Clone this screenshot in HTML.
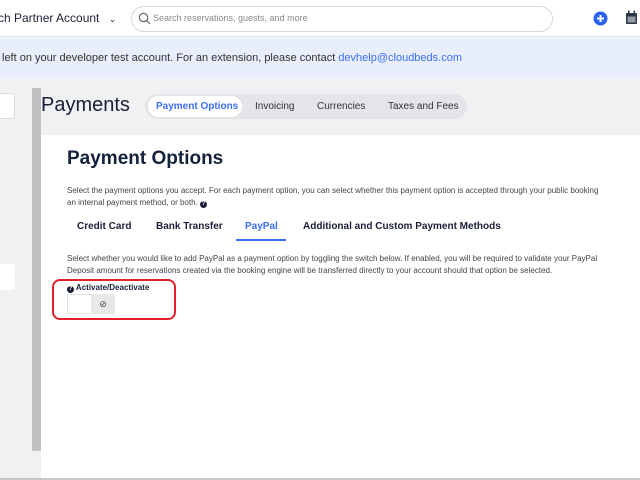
<!DOCTYPE html>
<html><head><meta charset="utf-8"><style>
*{margin:0;padding:0;box-sizing:border-box}
body{width:640px;height:480px;overflow:hidden;background:#f0f1f3;font-family:"Liberation Sans",sans-serif;position:relative;color:#1a1f36}
.abs{position:absolute}
.q{display:inline-block;width:7px;height:7px;border-radius:50%;background:#1a1f36;color:#fff;font-size:6px;line-height:7px;text-align:center;font-weight:bold;vertical-align:0}
</style></head><body>
<div class="abs" style="left:0;top:0;width:640px;height:37px;background:#fff;border-bottom:1px solid #e4e6ea"></div>
<div class="abs" style="left:-2px;top:11px;font-size:12px;color:#1a1f36">ch Partner Account <span style="font-size:9px;margin-left:6px">&#8964;</span></div>
<div class="abs" style="left:131px;top:6px;width:422px;height:26px;border:1px solid #d6d8dc;border-radius:13px;background:#fff"></div>
<svg class="abs" style="left:138px;top:12px" width="13" height="13" viewBox="0 0 13 13"><circle cx="5.5" cy="5.5" r="4.2" fill="none" stroke="#666" stroke-width="1.2"/><path d="M8.6 8.6L12 12" stroke="#666" stroke-width="1.2"/></svg>
<div class="abs" style="left:153px;top:13px;font-size:9px;color:#888">Search reservations, guests, and more</div>
<svg class="abs" style="left:593px;top:11px" width="15" height="15"><circle cx="7.5" cy="7.5" r="7" fill="#2a62f0"/><path d="M7.5 4v7M4 7.5h7" stroke="#fff" stroke-width="2"/></svg>
<svg class="abs" style="left:625px;top:10px" width="13" height="15"><rect x="1" y="3" width="11" height="11" rx="1" fill="#2b3648"/><rect x="3" y="0.5" width="1.5" height="3" fill="#2b3648"/><rect x="8.5" y="0.5" width="1.5" height="3" fill="#2b3648"/><rect x="2.5" y="6.5" width="8" height="6" fill="#fff" opacity=".5"/></svg>
<div class="abs" style="left:0;top:38px;width:640px;height:40px;background:#e8eefb"></div>
<div class="abs" style="left:2px;top:52px;font-size:11px;color:#333">left on your developer test account. For an extension, please contact <span style="color:#3b6ff0">devhelp@cloudbeds.com</span></div>
<div class="abs" style="left:0;top:93px;width:15px;height:26px;background:#fff;border:1px solid #dcdde0;border-left:none;border-radius:0 3px 3px 0"></div>
<div class="abs" style="left:0;top:264px;width:15px;height:26px;background:#fff;border-radius:0 3px 3px 0"></div>
<div class="abs" style="left:31px;top:80px;width:10px;height:400px;background:#f1f1f1"></div>
<div class="abs" style="left:32px;top:88px;width:9px;height:363px;background:#c1c1c1"></div>
<div class="abs" style="left:41px;top:135px;width:599px;height:345px;background:#fff"></div>
<div class="abs" style="left:0;top:478px;width:640px;height:2px;background:#c8c8c8"></div>
<div class="abs" style="left:41px;top:94px;font-size:20px;color:#1a1f36">Payments</div>
<div class="abs" style="left:145px;top:94px;width:322px;height:25px;background:#e3e5e9;border-radius:13px"></div>
<div class="abs" style="left:148px;top:96px;width:94px;height:21px;background:#fff;border-radius:11px"></div>
<div class="abs" style="left:156px;top:101px;font-size:10px;color:#3b6ff0;font-weight:bold">Payment Options</div>
<div class="abs" style="left:255px;top:101px;font-size:10px;color:#333">Invoicing</div>
<div class="abs" style="left:317px;top:101px;font-size:10px;color:#333">Currencies</div>
<div class="abs" style="left:388px;top:101px;font-size:10px;color:#333">Taxes and Fees</div>
<div class="abs" style="left:67px;top:148px;font-size:19px;font-weight:bold;color:#14213d">Payment Options</div>
<div class="abs" style="left:67px;top:185px;font-size:8px;color:#444;line-height:12px;white-space:nowrap">Select the payment options you accept. For each payment option, you can select whether this payment option is accepted through your public booking<br>an internal payment method, or both. <span class="q">?</span></div>
<div class="abs" style="left:77px;top:221px;font-size:10px;font-weight:bold;color:#1a1f36">Credit Card</div>
<div class="abs" style="left:156px;top:221px;font-size:10px;font-weight:bold;color:#1a1f36">Bank Transfer</div>
<div class="abs" style="left:245px;top:221px;font-size:10px;font-weight:bold;color:#3b6ff0">PayPal</div>
<div class="abs" style="left:236px;top:239px;width:50px;height:2px;background:#3b6ff0"></div>
<div class="abs" style="left:303px;top:221px;font-size:10px;font-weight:bold;color:#1a1f36">Additional and Custom Payment Methods</div>
<div class="abs" style="left:67px;top:253px;font-size:8px;color:#444;line-height:12px;white-space:nowrap">Select whether you would like to add PayPal as a payment option by toggling the switch below. If enabled, you will be required to validate your PayPal<br>Deposit amount for reservations created via the booking engine will be transferred directly to your account should that option be selected.</div>
<div class="abs" style="left:52px;top:279px;width:124px;height:41px;border:2px solid #e0202a;border-radius:8px"></div>
<div class="abs" style="left:67px;top:283px;font-size:8px;font-weight:bold;color:#1a1f36"><span class="q">?</span> Activate/Deactivate</div>
<div class="abs" style="left:67px;top:294px;width:48px;height:20px;border:1px solid #e3e3e3;border-radius:2px;background:#fff"></div>
<div class="abs" style="left:91px;top:294px;width:24px;height:20px;background:#e8e8e8;font-size:9px;text-align:center;line-height:20px;color:#444">&#8856;</div>
</body></html>
